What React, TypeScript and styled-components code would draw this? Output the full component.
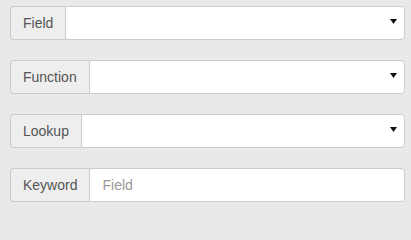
import React from 'react';
import styled, { createGlobalStyle } from 'styled-components';

const GlobalStyle = createGlobalStyle`
    html, body {
        margin: 0;
        padding: 0;
        background-color: #e9e9e9;
    }
    * {
        box-sizing: border-box;
    }
`;

const rows = [
    { label: 'Field', kind: 'select' },
    { label: 'Function', kind: 'select' },
    { label: 'Lookup', kind: 'select' },
    { label: 'Keyword', kind: 'text', placeholder: 'Field' },
];

const App: React.FC = () => {
    return (
        <>
            <GlobalStyle />
            <Form>
                {rows.map(row => (
                    <InputGroup key={row.label}>
                        <Addon>{row.label}</Addon>
                        {row.kind === 'select' ? (
                            <SelectWrap>
                                <Select defaultValue="">
                                    <option value="" />
                                </Select>
                                <Caret width="7" height="5" viewBox="0 0 7 5">
                                    <polygon points="0,0 7,0 3.5,5" fill="#111" />
                                </Caret>
                            </SelectWrap>
                        ) : (
                            <TextInput type="text" placeholder={row.placeholder} />
                        )}
                    </InputGroup>
                ))}
            </Form>
        </>
    );
};

const Form = styled.div`
    display: flex;
    flex-direction: column;
    gap: 20px;
    padding: 6px 6px 0 10px;
    width: 411px;
    font-family: "Liberation Sans", Arial, Helvetica, sans-serif;
    font-size: 14px;
`;

const InputGroup = styled.div`
    display: flex;
    height: 34px;
    width: 395px;
`;

const Addon = styled.span`
    display: flex;
    align-items: center;
    padding: 0 12px;
    background-color: #eeeeee;
    border: 1px solid #cccccc;
    border-right: 0;
    border-radius: 4px 0 0 4px;
    color: #555555;
    line-height: 1;
    white-space: nowrap;
`;

const SelectWrap = styled.div`
    position: relative;
    flex: 1;
    display: flex;
`;

const Select = styled.select`
    flex: 1;
    appearance: none;
    -webkit-appearance: none;
    height: 34px;
    padding: 6px 12px;
    background-color: #ffffff;
    border: 1px solid #cccccc;
    border-radius: 0 4px 4px 0;
    font: inherit;
    color: #555555;
    outline: none;
`;

const Caret = styled.svg`
    position: absolute;
    right: 8px;
    top: 13px;
    pointer-events: none;
`;

const TextInput = styled.input`
    flex: 1;
    height: 34px;
    padding: 6px 12px;
    background-color: #ffffff;
    border: 1px solid #cccccc;
    border-radius: 0 4px 4px 0;
    font: inherit;
    color: #555555;
    outline: none;

    &::placeholder {
        color: #999999;
    }
`;

export default App;
